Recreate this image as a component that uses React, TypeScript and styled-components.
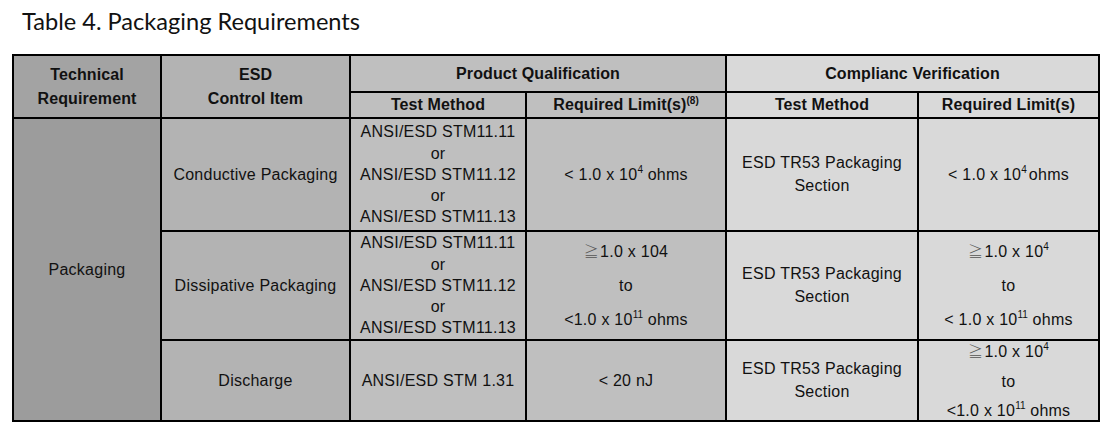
import React from "react";
import styled, { createGlobalStyle } from "styled-components";

const Global = createGlobalStyle`
  html, body { margin: 0; padding: 0; background: #ffffff; }
  body { width: 1112px; height: 438px; overflow: hidden; }
`;

const Page = styled.div`
  display: flex;
  flex-direction: column;
  width: 1112px;
  height: 438px;
  background: #ffffff;
`;

const Title = styled.h1`
  box-sizing: border-box;
  height: 54px;
  margin: 0;
  padding: 8px 0 0 22px;
  font-family: Lato, "Open Sans", sans-serif;
  font-weight: 400;
  font-size: 23.6px;
  line-height: 27.6px;
  color: #111111;
`;

const Grid = styled.div`
  display: grid;
  grid-template-columns: 146px 187px 174px 198px 190px 179px;
  grid-template-rows: 35px 24px 111px 107px 79px;
  gap: 2px;
  padding: 2px;
  margin-left: 12px;
  width: max-content;
  background: #000000;
`;

type CellProps = {
  $bg: string;
  $bold?: boolean;
  $lh?: number;
  $rows?: number;
  $cols?: number;
};

const Cell = styled.div<CellProps>`
  display: flex;
  flex-direction: column;
  align-items: center;
  justify-content: center;
  min-height: 0;
  text-align: center;
  background: ${(p) => p.$bg};
  grid-row: span ${(p) => p.$rows ?? 1};
  grid-column: span ${(p) => p.$cols ?? 1};
  font-family: "Liberation Sans", Arial, sans-serif;
  font-size: 16px;
  font-weight: ${(p) => (p.$bold ? 700 : 400)};
  letter-spacing: ${(p) => (p.$bold ? "0.1px" : "0.25px")};
  line-height: ${(p) => p.$lh ?? 22}px;
  color: #111111;
  white-space: nowrap;
`;

const Line = styled.span`
  display: block;
`;

const Sup = styled.sup`
  font-size: 10px;
  line-height: 0;
  vertical-align: baseline;
  position: relative;
  top: -0.65em;
  letter-spacing: 0;
`;

const Gap = styled.span`
  display: inline-block;
  width: ${(p: { $w: number }) => p.$w}px;
`;

const Geq = styled.span`
  font-family: "DejaVu Sans", "Noto Sans CJK JP", sans-serif;
  font-size: 15px;
  font-weight: 300;
  color: #555555;
  margin-right: 1px;
`;

const C1 = "#a3a3a3";
const C1B = "#9c9c9c";
const C2 = "#b3b3b3";
const PQ = "#bfbfbf";
const CV = "#d9d9d9";

const ansi = ["ANSI/ESD STM11.11", "or", "ANSI/ESD STM11.12", "or", "ANSI/ESD STM11.13"];

const Lines: React.FC<{ items: React.ReactNode[] }> = ({ items }) => (
  <>
    {items.map((t, i) => (
      <Line key={i}>{t}</Line>
    ))}
  </>
);

const TR53 = () => <Lines items={["ESD TR53 Packaging", "Section"]} />;

export default function App() {
  return (
    <Page>
      <Global />
      <Title>Table 4. Packaging Requirements</Title>
      <Grid>
        <Cell $bg={C1} $bold $rows={2} $lh={24}>
          <Lines items={["Technical", "Requirement"]} />
        </Cell>
        <Cell $bg={C2} $bold $rows={2} $lh={24}>
          <Lines items={["ESD", "Control Item"]} />
        </Cell>
        <Cell $bg={PQ} $bold $cols={2}>Product Qualification</Cell>
        <Cell $bg={CV} $bold $cols={2}>Complianc Verification</Cell>
        <Cell $bg={PQ} $bold>Test Method</Cell>
        <Cell $bg={PQ} $bold>
          <Line>
            Required Limit(s)<Sup>(8)</Sup>
          </Line>
        </Cell>
        <Cell $bg={CV} $bold>Test Method</Cell>
        <Cell $bg={CV} $bold>Required Limit(s)</Cell>

        <Cell $bg={C1B} $rows={3}>Packaging</Cell>

        <Cell $bg={C2}>Conductive Packaging</Cell>
        <Cell $bg={PQ} $lh={21.3}>
          <Lines items={ansi} />
        </Cell>
        <Cell $bg={PQ}>
          <Line>
            &lt; 1.0 x 10<Sup>4</Sup> ohms
          </Line>
        </Cell>
        <Cell $bg={CV} $lh={22.8}>
          <TR53 />
        </Cell>
        <Cell $bg={CV}>
          <Line>
            &lt; 1.0 x 10<Sup>4</Sup>
            <Gap $w={2} />
            ohms
          </Line>
        </Cell>

        <Cell $bg={C2}>Dissipative Packaging</Cell>
        <Cell $bg={PQ} $lh={21.3}>
          <Lines items={ansi} />
        </Cell>
        <Cell $bg={PQ} $lh={33.5}>
          <Lines
            items={[
              <>
                <Geq>≧</Geq>1.0 x 104
              </>,
              "to",
              <>
                &lt;1.0 x 10<Sup>11</Sup> ohms
              </>,
            ]}
          />
        </Cell>
        <Cell $bg={CV} $lh={22.8}>
          <TR53 />
        </Cell>
        <Cell $bg={CV} $lh={33.5}>
          <Lines
            items={[
              <>
                <Geq>≧</Geq>1.0 x 10<Sup>4</Sup>
              </>,
              "to",
              <>
                &lt; 1.0 x 10<Sup>11</Sup> ohms
              </>,
            ]}
          />
        </Cell>

        <Cell $bg={C2}>Discharge</Cell>
        <Cell $bg={PQ}>ANSI/ESD STM 1.31</Cell>
        <Cell $bg={PQ}>&lt; 20 nJ</Cell>
        <Cell $bg={CV} $lh={22.5}>
          <TR53 />
        </Cell>
        <Cell $bg={CV} $lh={29}>
          <Lines
            items={[
              <>
                <Geq>≧</Geq>1.0 x 10<Sup>4</Sup>
              </>,
              "to",
              <>
                &lt;1.0 x 10<Sup>11</Sup> ohms
              </>,
            ]}
          />
        </Cell>
      </Grid>
    </Page>
  );
}
